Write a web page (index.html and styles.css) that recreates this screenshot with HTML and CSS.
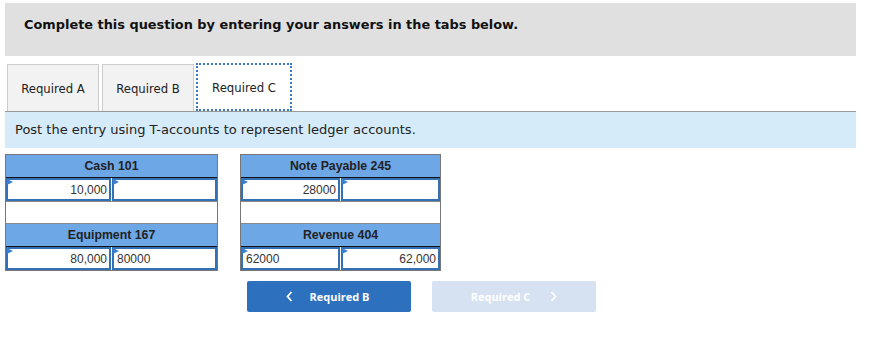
FILE: index.html
```html
<!DOCTYPE html>
<html>
<head>
<meta charset="utf-8">
<link rel="stylesheet" href="styles.css">
</head>
<body>
<div class="page">
  <div class="banner">Complete this question by entering your answers in the tabs below.</div>
  <div class="tabs">
    <div class="tab">Required A</div>
    <div class="tab">Required B</div>
    <div class="tab active">Required C</div>
  </div>
  <div class="instr">Post the entry using T-accounts to represent ledger accounts.</div>
  <div class="ledger">
    <div class="acct left">
      <div class="hd">Cash 101</div>
      <div class="inrow">
        <div class="cell r"><span class="tri"></span>10,000</div>
        <div class="cell"><span class="tri"></span></div>
      </div>
      <div class="blank"></div>
      <div class="hd">Equipment 167</div>
      <div class="inrow">
        <div class="cell r"><span class="tri"></span>80,000</div>
        <div class="cell"><span class="tri"></span>80000</div>
      </div>
    </div>
    <div class="spacer"></div>
    <div class="acct right">
      <div class="hd">Note Payable 245</div>
      <div class="inrow">
        <div class="cell r"><span class="tri"></span>28000</div>
        <div class="cell"><span class="tri"></span></div>
      </div>
      <div class="blank"></div>
      <div class="hd">Revenue 404</div>
      <div class="inrow">
        <div class="cell"><span class="tri"></span>62000</div>
        <div class="cell r"><span class="tri"></span>62,000</div>
      </div>
    </div>
  </div>
  <div class="nav">
    <div class="btn prev"><svg class="chev" width="7" height="11" viewBox="0 0 7 11"><path d="M5.5 1 L1.5 5.5 L5.5 10" fill="none" stroke="#fff" stroke-width="1.8"/></svg>Required B</div>
    <div class="btn next">Required C<svg class="chev" width="7" height="11" viewBox="0 0 7 11"><path d="M1.5 1 L5.5 5.5 L1.5 10" fill="none" stroke="#fff" stroke-width="1.8"/></svg></div>
  </div>
</div>
</body>
</html>
```

FILE: styles.css
```css
* { box-sizing: border-box; }
body { margin: 0; background: #fff; }
.page { padding: 3px 0 0 5px; width: 856px; }
.banner {
  height: 53px;
  background: #e0e0e0;
  font-family: "DejaVu Sans", Verdana, sans-serif;
  font-weight: bold;
  font-size: 12.9px;
  color: #111;
  padding: 14px 0 0 19px;
}
.tabs {
  display: flex;
  margin-top: 8px;
  padding-left: 2px;
  gap: 3px;
  border-bottom: 1px solid #999;
  height: 48px;
}
.tab {
  width: 92px;
  height: 47px;
  background: #f2f2f2;
  border: 1px solid #ccc;
  border-bottom: none;
  font-family: "DejaVu Sans", Verdana, sans-serif;
  font-size: 11.7px;
  color: #222;
  display: flex;
  align-items: center;
  justify-content: center;
  padding-top: 1px;
}
.tab.active {
  width: 96px;
  height: 48px;
  margin-top: -1px;
  background: #fff;
  border: 2px dotted #3a78c8;
  margin-left: -1px;
  padding-top: 2px;
}
.instr {
  height: 36px;
  background: #d6ebf9;
  font-family: "DejaVu Sans", Verdana, sans-serif;
  font-size: 13px;
  color: #222;
  padding: 10px 0 0 10px;
}
.ledger {
  display: flex;
  margin-top: 6px;
  font-family: "Liberation Sans", Arial, sans-serif;
  font-size: 12px;
  color: #222;
}
.acct { border: 1px solid #777; }
.acct.left { width: 213px; }
.acct.right { width: 201px; }
.spacer { width: 22px; }
.hd {
  height: 23px;
  background: #6ea7e6;
  border-bottom: 1px solid #111;
  font-weight: bold;
  font-size: 12.3px;
  text-align: center;
  padding-top: 4px;
  color: #222;
}
.inrow {
  display: flex;
  height: 23px;
  gap: 1px;
}
.cell {
  position: relative;
  flex: 1;
  height: 23px;
  border: 2px solid #3470b5;
  background: #fff;
  padding: 3px 2px 0 3px;
  font-size: 12px;
  color: #333;
}
.cell.r { text-align: right; }
.tri {
  position: absolute;
  left: -1px;
  top: -1px;
  width: 0; height: 0;
  border-top: 3px solid transparent;
  border-bottom: 3px solid transparent;
  border-left: 6px solid #3a80d0;
}
.blank {
  height: 23px;
  border-top: 1px solid #888;
  border-bottom: 1px solid #888;
  background: #fff;
}
.nav {
  display: flex;
  gap: 21px;
  margin: 10px 0 0 242px;
}
.btn {
  width: 164px;
  height: 31px;
  border-radius: 2px;
  font-family: "Open Sans", "Liberation Sans", sans-serif;
  font-weight: bold;
  font-size: 11px;
  color: #fff;
  display: flex;
  align-items: center;
  justify-content: center;
}
.btn.prev { background: #2d70be; }
.btn.next { background: #d6e2f2; }
.prev .chev { margin-right: 16px; margin-left: -2px; }
.next .chev { margin-left: 20px; }
```
